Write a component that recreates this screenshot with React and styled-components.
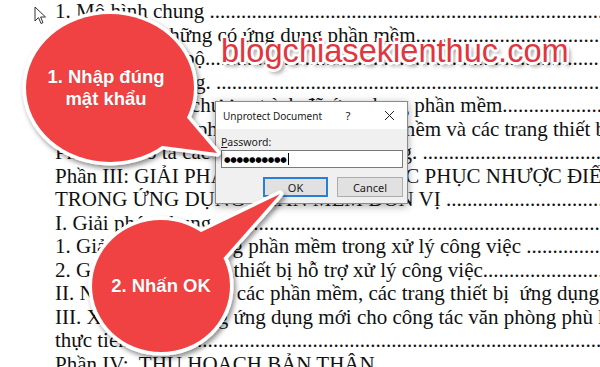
import React from 'react';
import styled, { createGlobalStyle } from 'styled-components';

const GlobalStyle = createGlobalStyle`
  html, body {
    margin: 0;
    padding: 0;
    background: #fff;
  }
`;

const Page = styled.div`
  position: relative;
  width: 600px;
  height: 367px;
  overflow: hidden;
  background: #fff;
`;

const Doc = styled.div`
  padding: 0 0 0 55px;
  font-family: 'Liberation Serif', 'Times New Roman', serif;
  font-size: 21px;
  line-height: 23.5px;
  color: #111;
`;

const Line = styled.div`
  white-space: pre;
  overflow: hidden;
`;

const Dialog = styled.div`
  position: absolute;
  left: 215px;
  top: 101px;
  width: 191px;
  height: 101px;
  border: 1px solid #8a8a8a;
  background: #f0f0f0;
  box-shadow: 0 2px 8px rgba(0, 0, 0, 0.35);
  display: flex;
  flex-direction: column;
  font-family: 'Noto Sans', 'Open Sans', sans-serif;
  font-size: 10.5px;
  color: #1a1a1a;
`;

const TitleBar = styled.div`
  height: 27px;
  background: #fff;
  display: flex;
  align-items: center;
  padding: 0 0 0 7px;
  white-space: nowrap;
`;

const Title = styled.span`
  flex: 1;
  font-size: 10px;
`;

const TitleButton = styled.span`
  width: ${(p) => p.$w}px;
  margin-right: ${(p) => p.$gap || 0}px;
  display: flex;
  justify-content: center;
  align-items: center;
  font-size: 11.5px;
`;

const Body = styled.div`
  flex: 1;
  padding: 6px 4px 0 5px;
  display: flex;
  flex-direction: column;
`;

const Label = styled.div`
  line-height: 14px;
  margin-bottom: 1px;
  & u {
    text-decoration: underline;
  }
`;

const Input = styled.div`
  height: 16px;
  border: 1px solid #7a7a7a;
  background: #fff;
  display: flex;
  align-items: center;
  padding-left: 2px;
  font-family: 'DejaVu Sans', sans-serif;
  font-size: 7.5px;
  letter-spacing: -0.3px;
  color: #000;
`;

const Caret = styled.span`
  display: inline-block;
  width: 1px;
  height: 12px;
  background: #000;
  margin-left: 2px;
`;

const Buttons = styled.div`
  display: flex;
  justify-content: flex-end;
  gap: 9px;
  margin-top: 9px;
`;

const Button = styled.div`
  width: ${(p) => (p.$primary ? 61 : 64)}px;
  height: ${(p) => (p.$primary ? 16 : 18)}px;
  border: ${(p) => (p.$primary ? '2px solid #2a7fd4' : '1px solid #adadad')};
  background: #e1e1e1;
  display: flex;
  align-items: center;
  justify-content: center;
  font-size: 11px;
`;

const Overlay = styled.svg`
  position: absolute;
  left: 0;
  top: 0;
  pointer-events: none;
`;

const BubbleText = styled.div`
  position: absolute;
  left: ${(p) => p.$x}px;
  top: ${(p) => p.$y}px;
  width: ${(p) => p.$w}px;
  text-align: center;
  font-family: 'Liberation Sans', Arial, sans-serif;
  font-weight: bold;
  font-size: 18.5px;
  line-height: 21.5px;
  color: #fff;
  text-shadow: 0 0 1px rgba(120, 0, 0, 0.3);
`;

const Logo = styled.div`
  position: absolute;
  left: 221px;
  top: 35px;
  font-family: 'Liberation Sans', Arial, sans-serif;
  font-size: 32.6px;
  line-height: 32px;
  color: #e2353d;
  white-space: nowrap;
  text-shadow:
    2.5px 0 0 #fff, -2.5px 0 0 #fff, 0 2.5px 0 #fff, 0 -2.5px 0 #fff,
    1.8px 1.8px 0 #fff, -1.8px -1.8px 0 #fff, 1.8px -1.8px 0 #fff, -1.8px 1.8px 0 #fff,
    3px 4px 4px rgba(0, 0, 0, 0.55);
`;

const Cursor = styled.svg`
  position: absolute;
  left: 34px;
  top: 6px;
`;

const dots = '.'.repeat(160);

const lines = [
  '1. Mô hình chung ' + dots,
  '2. Hệ thống những có ứng dụng phần mềm' + dots,
  '3. Đội ngũ cán bộ' + dots,
  '4. Hệ thống mạng. ' + dots,
  '5. Đánh giá các chương trình đã ứng dụng phần mềm.' + dots,
  '6. Các khó khăn phải gặp khi dùng phần mềm và các trang thiết bị',
  'Phần II: Mô tả các chức năng đã ứng dụng. ' + dots,
  'Phần III: GIẢI PHÁP ỨNG DỤNG KHẮC PHỤC NHƯỢC ĐIỂM',
  'TRONG ỨNG DỤNG PHẦN MỀM ĐƠN VỊ ' + dots,
  'I. Giải pháp chung ' + dots,
  '1. Giải pháp ứng dụng phần mềm trong xử lý công việc ' + dots,
  '2. Giải pháp trang bị thiết bị hỗ trợ xử lý công việc' + dots,
  'II. Nâng cao sử dụng các phần mềm, các trang thiết bị  ứng dụng công nghệ',
  'III. Xây dựng những ứng dụng mới cho công tác văn phòng phù hợp với',
  'thực tiễn' + dots,
  'Phần IV:  THU HOẠCH BẢN THÂN',
];

const RED = '#f04343';

const Callouts = () => (
  <Overlay width="600" height="367" viewBox="0 0 600 367">
    <defs>
      <filter id="sh" x="-20%" y="-20%" width="140%" height="140%">
        <feDropShadow dx="2" dy="3" stdDeviation="2.5" floodColor="#000" floodOpacity="0.45" />
      </filter>
    </defs>
    <g filter="url(#sh)">
      <ellipse cx="110" cy="88" rx="84" ry="74" fill="#fff" stroke="#fff" strokeWidth="7" />
      <polygon points="172,100 217,153 155,145" fill="#fff" stroke="#fff" strokeWidth="7" strokeLinejoin="round" />
      <ellipse cx="110" cy="88" rx="84" ry="74" fill={RED} />
      <polygon points="172,100 217,153 155,145" fill={RED} />
    </g>
    <g filter="url(#sh)">
      <ellipse cx="161" cy="286" rx="69" ry="66" fill="#fff" stroke="#fff" strokeWidth="7" />
      <polygon points="195,235 280,194 220,262" fill="#fff" stroke="#fff" strokeWidth="7" strokeLinejoin="round" />
      <ellipse cx="161" cy="286" rx="69" ry="66" fill={RED} />
      <polygon points="195,235 280,194 220,262" fill={RED} />
    </g>
  </Overlay>
);

const CloseIcon = () => (
  <svg width="11" height="11" viewBox="0 0 11 11">
    <path d="M1 1 L10 10 M10 1 L1 10" stroke="#222" strokeWidth="1" />
  </svg>
);

export default function App() {
  return (
    <>
      <GlobalStyle />
      <Page>
        <Doc>
          {lines.map((t, i) => (
            <Line key={i}>{t}</Line>
          ))}
        </Doc>

        <Dialog>
          <TitleBar>
            <Title>Unprotect Document</Title>
            <TitleButton $w={22} $gap={12}>?</TitleButton>
            <TitleButton $w={36}>
              <CloseIcon />
            </TitleButton>
          </TitleBar>
          <Body>
            <Label>
              <u>P</u>assword:
            </Label>
            <Input>
              ●●●●●●●●●●
              <Caret />
            </Input>
            <Buttons>
              <Button $primary>OK</Button>
              <Button>Cancel</Button>
            </Buttons>
          </Body>
        </Dialog>

        <Callouts />
        <BubbleText $x={20} $y={66} $w={172}>
          1. Nhập đúng
          <br />
          mật khẩu
        </BubbleText>
        <BubbleText $x={81} $y={275} $w={160}>
          2. Nhấn OK
        </BubbleText>

        <Logo>blogchiasekienthuc.com</Logo>

        <Cursor width="13" height="20" viewBox="0 0 13 20">
          <path d="M1 1 L1 15 L4.5 11.5 L7 17.5 L9 16.6 L6.6 11 L11.5 11 Z" fill="#fff" stroke="#333" strokeWidth="1" strokeLinejoin="round" />
        </Cursor>
      </Page>
    </>
  );
}
